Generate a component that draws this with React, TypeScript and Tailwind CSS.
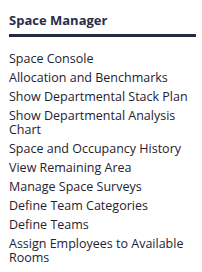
const items = [
  "Space Console",
  "Allocation and Benchmarks",
  "Show Departmental Stack Plan",
  "Show Departmental Analysis Chart",
  "Space and Occupancy History",
  "View Remaining Area",
  "Manage Space Surveys",
  "Define Team Categories",
  "Define Teams",
  "Assign Employees to Available Rooms",
]

export default function App() {
  return (
    <div className="w-[202px] h-[272px] bg-white pl-[9px] pr-[6px] pt-[11px] font-['Open_Sans',sans-serif]">
      {/* Section heading */}
      <h2 className="text-[13px] leading-[18px] font-bold text-[#2a2e45]">Space Manager</h2>
      <div className="mt-[5px] h-[3px] bg-[#262a40]" />

      {/* Links */}
      <ul className="mt-[15px] flex flex-col gap-[5px] pr-[4px]">
        {items.map((item) => (
          <li key={item} className="text-[12.5px] leading-[14px] text-[#1f2233]">
            {item}
          </li>
        ))}
      </ul>
    </div>
  )
}
